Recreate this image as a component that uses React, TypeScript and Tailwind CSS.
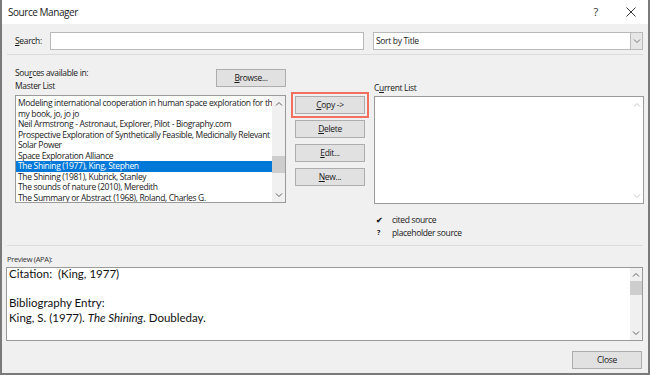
import React from "react";

const UI = "font-['Open_Sans','Noto_Sans',sans-serif] tracking-[-0.33px]";

const MASTER = [
  "Modeling international cooperation in human space exploration for the",
  "my book, jo, jo jo",
  "Neil Armstrong - Astronaut, Explorer, Pilot - Biography.com",
  "Prospective Exploration of Synthetically Feasible, Medicinally Relevant",
  "Solar Power",
  "Space Exploration Alliance",
  "The Shining (1977), King, Stephen",
  "The Shining (1981), Kubrick, Stanley",
  "The sounds of nature (2010), Meredith",
  "The Summary or Abstract (1968), Roland, Charles G.",
];

function Chevron({ up, color = "#606060" }: { up?: boolean; color?: string }) {
  return (
    <svg width="8" height="5" viewBox="0 0 8 5">
      <path
        d={up ? "M1 4.5 L4 1.5 L7 4.5" : "M1 0.5 L4 3.5 L7 0.5"}
        stroke={color}
        strokeWidth="1"
        fill="none"
      />
    </svg>
  );
}

function Btn({ children, className = "" }: { children: React.ReactNode; className?: string }) {
  return (
    <div
      className={`h-[18px] w-[70px] bg-[#e1e1e1] border border-[#adadad] flex items-center justify-center text-[8.5px] text-[#1a1a1a] ${className}`}
    >
      {children}
    </div>
  );
}

export default function App() {
  return (
    <div className={`w-[650px] h-[375px] bg-[#f0f0f0] border-x-2 border-b-2 border-[#7a7a7a] flex flex-col text-[#1a1a1a] ${UI}`}>
      {/* title bar */}
      <div className="h-[24px] bg-white flex items-center shrink-0">
        <span className="ml-[6px] text-[10px] tracking-[-0.45px]">Source Manager</span>
        <span className="ml-auto mr-[28px] text-[11px] text-[#333]">?</span>
        <svg width="10" height="10" viewBox="0 0 10 10" className="mr-[12px]">
          <path d="M0.5 0.5 L9.5 9.5 M9.5 0.5 L0.5 9.5" stroke="#333" strokeWidth="1" />
        </svg>
      </div>

      {/* search row */}
      <div className="mt-[8px] h-[18px] flex items-center">
        <span className="ml-[13px] w-[35px] text-[8.5px]">
          <span className="underline">S</span>earch:
        </span>
        <div className="h-[18px] w-[314px] bg-white border border-[#b9b9b9]" />
        <div className="ml-[9px] h-[18px] w-[270px] bg-white border border-[#b9b9b9] flex items-center">
          <span className="ml-[2px] text-[8.5px]">Sort by Title</span>
          <div className="ml-auto h-full w-[12px] bg-[#e6e6e6] border-l border-[#b9b9b9] flex items-center justify-center">
            <Chevron color="#777" />
          </div>
        </div>
      </div>

      <div className="mt-[4px] mx-[5px] h-px bg-[#dcdcdc]" />

      {/* lists */}
      <div className="mt-[11px] flex items-start">
        <div className="ml-[13px] w-[271px] flex flex-col">
          <div className="h-[29px] flex justify-between">
            <div className="text-[8.5px] leading-[13px]">
              <div>
                Sou<span className="underline">r</span>ces available in:
              </div>
              <div>Master List</div>
            </div>
            <Btn className="mt-[3px]">
              <span>
                <span className="underline">B</span>rowse...
              </span>
            </Btn>
          </div>
          <div className="h-[108px] bg-white border border-[#9a9a9a] flex">
            <div className="flex-1 min-w-0 pt-[2px] overflow-hidden">
              {MASTER.map((m, i) => (
                <div
                  key={m}
                  className={`h-[10.5px] leading-[10.5px] pl-[2px] text-[8.5px] whitespace-nowrap ${
                    i === 6 ? "bg-[#0078d7] text-white" : ""
                  }`}
                >
                  {m}
                </div>
              ))}
            </div>
            <div className="w-[13px] bg-[#f0f0f0] flex flex-col items-center">
              <div className="h-[14px] flex items-center">
                <Chevron up />
              </div>
              <div className="mt-[46px] h-[17px] w-[13px] bg-[#cdcdcd]" />
              <div className="mt-auto h-[14px] flex items-center">
                <Chevron />
              </div>
            </div>
          </div>
        </div>

        <div className="ml-[9px] mt-[30px] flex flex-col gap-[6px]">
          <Btn className="outline-2 outline-offset-2 outline-[#f2705f]">
            <span>
              <span className="underline">C</span>opy -&gt;
            </span>
          </Btn>
          <Btn>
            <span>
              <span className="underline">D</span>elete
            </span>
          </Btn>
          <Btn>
            <span>
              <span className="underline">E</span>dit...
            </span>
          </Btn>
          <Btn>
            <span>
              <span className="underline">N</span>ew...
            </span>
          </Btn>
        </div>

        <div className="ml-[9px] w-[270px] flex flex-col">
          <div className="h-[30px] flex items-end pb-[2px] text-[8.5px] leading-[13px]">
            <span>
              C<span className="underline">u</span>rrent List
            </span>
          </div>
          <div className="h-[108px] bg-white border border-[#9a9a9a] flex justify-end">
            <div className="w-[13px] flex flex-col items-center">
              <div className="h-[14px] flex items-center">
                <Chevron up color="#c4c4c4" />
              </div>
              <div className="mt-auto h-[14px] flex items-center">
                <Chevron color="#c4c4c4" />
              </div>
            </div>
          </div>
          <div className="mt-[9px] text-[8.5px] leading-[13px]">
            <div className="flex items-center">
              <span className="w-[18px] pl-[2px] text-[8px] font-bold">✔</span>
              <span>cited source</span>
            </div>
            <div className="flex items-center">
              <span className="w-[18px] pl-[3px] text-[7px] font-bold">?</span>
              <span>placeholder source</span>
            </div>
          </div>
        </div>
      </div>

      <div className="mt-[6px] mx-[5px] h-px bg-[#dcdcdc]" />

      {/* preview */}
      <div className="mt-[7px] ml-[5px] text-[7.5px] leading-[12px] text-[#333]">Preview (APA):</div>
      <div className="mt-[2px] ml-[4px] w-[637px] h-[74px] bg-white border border-[#9a9a9a] flex">
        <div className="flex-1 pl-[2px] -mt-[1px] font-['Lato','Noto_Sans',sans-serif] tracking-normal text-[11.5px] leading-[14.5px] text-[#111]">
          <div>Citation:&nbsp; (King, 1977)</div>
          <div>&nbsp;</div>
          <div>Bibliography Entry:</div>
          <div>
            King, S. (1977). <i>The Shining</i>. Doubleday.
          </div>
        </div>
        <div className="w-[12px] bg-[#f0f0f0] flex flex-col items-center">
          <div className="h-[13px] flex items-center">
            <Chevron up />
          </div>
          <div className="h-[14px] w-[12px] bg-[#cdcdcd]" />
          <div className="mt-auto h-[13px] flex items-center">
            <Chevron />
          </div>
        </div>
      </div>

      <div className="mt-[10px] flex justify-end mr-[6px]">
        <Btn>Close</Btn>
      </div>
    </div>
  );
}
